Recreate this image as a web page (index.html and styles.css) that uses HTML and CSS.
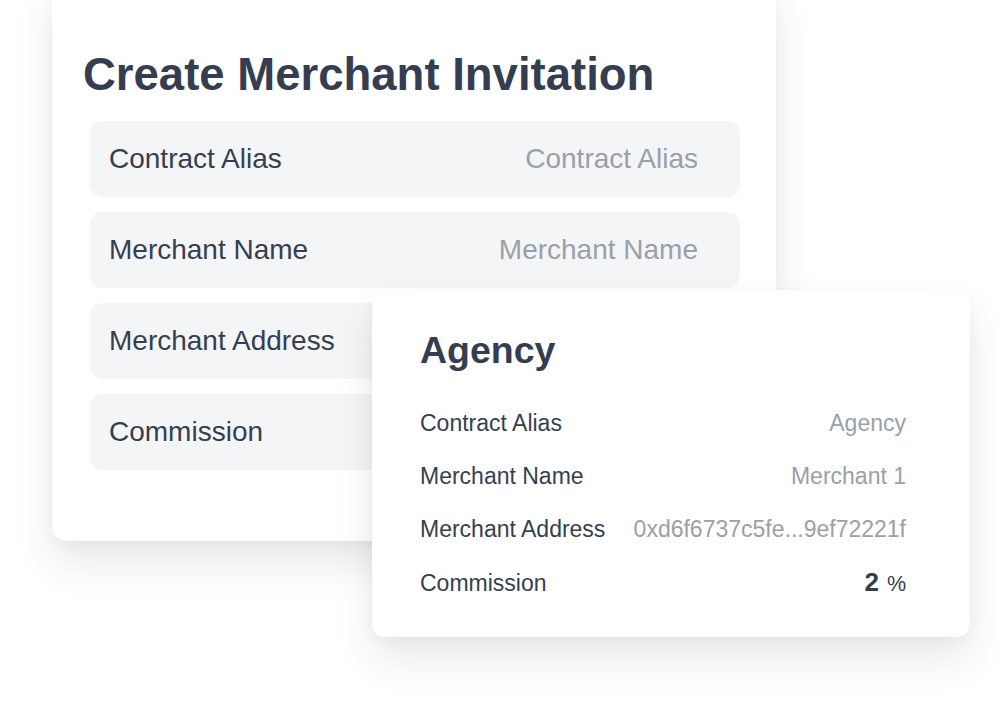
FILE: index.html
```html
<!DOCTYPE html>
<html>
<head>
<meta charset="utf-8">
<link rel="stylesheet" href="styles.css">
</head>
<body>
<div class="stage">
  <section class="card card-form">
    <h1 class="form-title">Create Merchant Invitation</h1>
    <div class="fields">
      <div class="field"><span class="field-label">Contract Alias</span><span class="field-placeholder">Contract Alias</span></div>
      <div class="field"><span class="field-label">Merchant Name</span><span class="field-placeholder">Merchant Name</span></div>
      <div class="field"><span class="field-label">Merchant Address</span><span class="field-placeholder"></span></div>
      <div class="field"><span class="field-label">Commission</span><span class="field-placeholder"></span></div>
    </div>
  </section>
  <section class="card card-summary">
    <h2 class="summary-title">Agency</h2>
    <div class="summary-rows">
      <div class="summary-row"><span class="summary-label">Contract Alias</span><span class="summary-value">Agency</span></div>
      <div class="summary-row"><span class="summary-label">Merchant Name</span><span class="summary-value">Merchant 1</span></div>
      <div class="summary-row"><span class="summary-label">Merchant Address</span><span class="summary-value">0xd6f6737c5fe...9ef72221f</span></div>
      <div class="summary-row"><span class="summary-label">Commission</span><span class="summary-value summary-pct"><b class="pct-num">2</b><span class="pct-sign">%</span></span></div>
    </div>
  </section>
</div>
</body>
</html>
```

FILE: styles.css
```css
html, body {
  margin: 0;
  padding: 0;
  background: #ffffff;
}

body {
  font-family: "Liberation Sans", Arial, sans-serif;
  color: #353f50;
  overflow: hidden;
  width: 1004px;
  height: 702px;
}

.stage {
  position: relative;
  width: 1004px;
  height: 702px;
  display: flex;
  flex-direction: column;
  align-items: flex-start;
}

.card {
  background: #ffffff;
  border-radius: 14px;
  box-shadow: 0 22px 42px rgba(0, 0, 0, 0.09), 0 4px 14px rgba(0, 0, 0, 0.035);
  box-sizing: border-box;
}

.card-form {
  margin-left: 52px;
  margin-top: -20px;
  width: 724px;
  height: 561px;
  padding: 67px 36px 0 38px;
  flex: none;
}

.form-title {
  margin: 0 0 19px -7px;
  font-size: 45.5px;
  line-height: 55px;
  font-weight: 700;
  color: #343e50;
  white-space: nowrap;
}

.fields {
  display: flex;
  flex-direction: column;
  gap: 15px;
}

.field {
  height: 76px;
  background: #f4f5f7;
  border-radius: 12px;
  display: flex;
  align-items: center;
  justify-content: space-between;
  padding: 0 42px 0 19px;
  font-size: 28px;
}

.field-label {
  color: #353f50;
}

.field-placeholder {
  color: #9aa0a9;
}

.card-summary {
  position: absolute;
  left: 372px;
  top: 290px;
  width: 598px;
  height: 347px;
  padding: 38px 64px 0 48px;
  border-radius: 13px;
}

.summary-title {
  margin: 0 0 25px 0;
  font-size: 37.5px;
  line-height: 44px;
  font-weight: 700;
  color: #343e50;
}

.summary-rows {
  display: flex;
  flex-direction: column;
}

.summary-row {
  height: 53px;
  line-height: 53px;
  display: flex;
  justify-content: space-between;
  align-items: baseline;
  font-size: 23px;
  white-space: nowrap;
}

.summary-label {
  color: #353f50;
}

.summary-value {
  color: #9aa0a9;
}

.summary-pct {
  color: #353f50;
  display: flex;
  align-items: baseline;
}

.pct-num {
  font-size: 26px;
  font-weight: 700;
  color: #343e50;
}

.pct-sign {
  font-size: 21.5px;
  margin-left: 8px;
}
```
